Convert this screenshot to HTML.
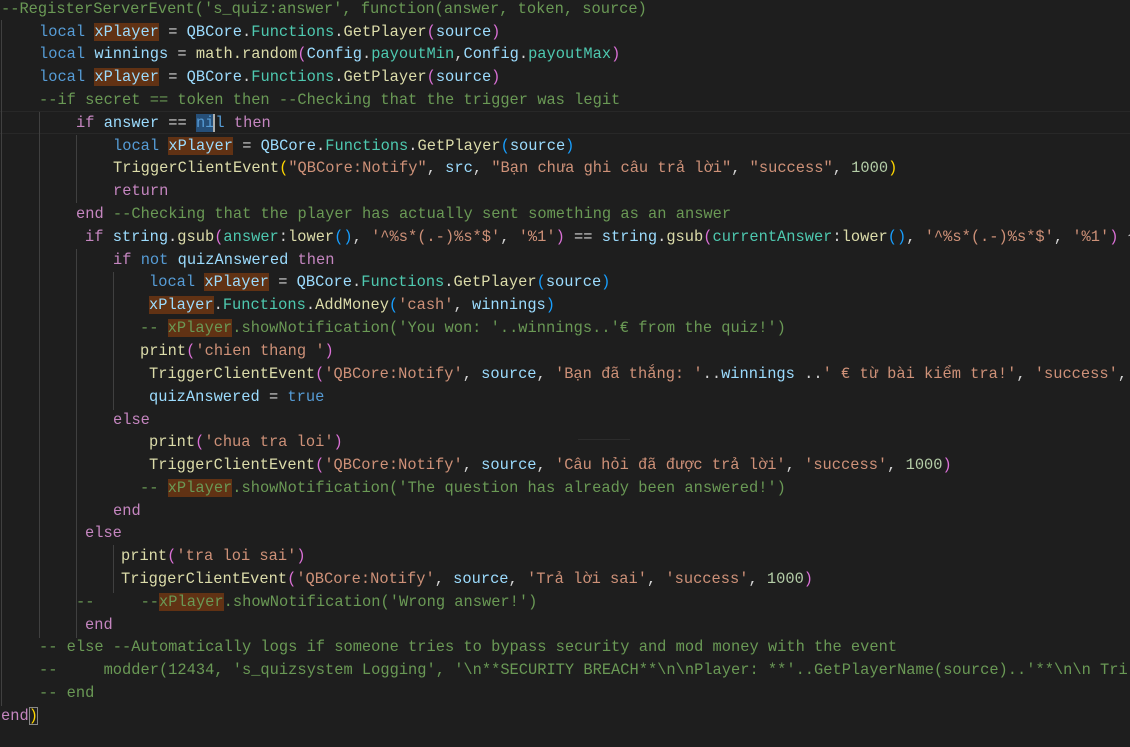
<!DOCTYPE html>
<html><head><meta charset="utf-8"><style>
html,body{margin:0;padding:0}
body{width:1130px;height:747px;background:#1e1e1e;overflow:hidden;position:relative;font-family:"Liberation Mono",monospace;font-size:15.38px;color:#d4d4d4}
#w{position:absolute;left:0;top:0;width:1130px;height:747px;overflow:hidden}
.l{position:absolute;white-space:pre;height:22.8px;line-height:22.8px;margin-top:2px}
.k{color:#569cd6}.c{color:#c586c0}.v{color:#9cdcfe}.f{color:#dcdcaa}.t{color:#4ec9b0}.s{color:#ce9178}.m{color:#6a9955}.n{color:#b5cea8}
.b1{color:#ffd700}.b2{color:#da70d6}.b3{color:#179fff}
.h{background:#613214}
.g{position:absolute;width:1px;background:#404040}
.cur{position:absolute;left:0;width:1130px;top:111px;height:21px;border-top:1px solid #282828;border-bottom:1px solid #282828}
</style></head><body><div id="w">
<div class="cur"></div>
<div class="g" style="left:1px;top:20px;height:686px"></div>
<div class="g" style="left:39px;top:112px;height:526px"></div>
<div class="g" style="left:76px;top:135px;height:68px"></div>
<div class="g" style="left:76px;top:249px;height:389px"></div>
<div class="g" style="left:113px;top:272px;height:138px"></div>
<div class="g" style="left:113px;top:545px;height:48px"></div>
<div style="position:absolute;left:578px;top:439px;width:52px;height:1px;background:#2c2c2c"></div>

<div class="l m" style="left:1px;top:-4px">--RegisterServerEvent('s_quiz:answer', function(answer, token, source)</div>
<div class="l" style="left:39px;top:19px"><span class="k">local</span> <span class="v h">xPlayer</span> = <span class="v">QBCore</span>.<span class="t">Functions</span>.<span class="f">GetPlayer</span><span class="b2">(</span><span class="v">source</span><span class="b2">)</span></div>
<div class="l" style="left:39px;top:41px"><span class="k">local</span> <span class="v">winnings</span> = <span class="f">math.random</span><span class="b2">(</span><span class="v">Config</span>.<span class="t">payoutMin</span>,<span class="v">Config</span>.<span class="t">payoutMax</span><span class="b2">)</span></div>
<div class="l" style="left:39px;top:64px"><span class="k">local</span> <span class="v h">xPlayer</span> = <span class="v">QBCore</span>.<span class="t">Functions</span>.<span class="f">GetPlayer</span><span class="b2">(</span><span class="v">source</span><span class="b2">)</span></div>
<div class="l m" style="left:39px;top:87px">--if secret == token then --Checking that the trigger was legit</div>
<div class="l" style="left:76px;top:110px"><span class="c">if</span> <span class="v">answer</span> == <span class="k" style="background:#264f78">ni</span><span class="k" style="border-left:2px solid #aeafad;margin-left:-1px">l</span> <span class="c">then</span></div>
<div class="l" style="left:113px;top:133px"><span class="k">local</span> <span class="v h">xPlayer</span> = <span class="v">QBCore</span>.<span class="t">Functions</span>.<span class="f">GetPlayer</span><span class="b3">(</span><span class="v">source</span><span class="b3">)</span></div>
<div class="l" style="left:113px;top:155px"><span class="f">TriggerClientEvent</span><span class="b1">(</span><span class="s">"QBCore:Notify"</span>, <span class="v">src</span>, <span class="s">"Bạn chưa ghi câu trả lời"</span>, <span class="s">"success"</span>, <span class="n">1000</span><span class="b1">)</span></div>
<div class="l c" style="left:113px;top:178px">return</div>
<div class="l" style="left:76px;top:201px"><span class="c">end</span> <span class="m">--Checking that the player has actually sent something as an answer</span></div>
<div class="l" style="left:85px;top:224px"><span class="c">if</span> <span class="v">string</span>.<span class="f">gsub</span><span class="b2">(</span><span class="t">answer</span>:<span class="f">lower</span><span class="b3">()</span>, <span class="s">'^%s*(.-)%s*$'</span>, <span class="s">'%1'</span><span class="b2">)</span> == <span class="v">string</span>.<span class="f">gsub</span><span class="b2">(</span><span class="t">currentAnswer</span>:<span class="f">lower</span><span class="b3">()</span>, <span class="s">'^%s*(.-)%s*$'</span>, <span class="s">'%1'</span><span class="b2">)</span> ~=</div>
<div class="l" style="left:113px;top:247px"><span class="c">if</span> <span class="k">not</span> <span class="v">quizAnswered</span> <span class="c">then</span></div>
<div class="l" style="left:149px;top:269px"><span class="k">local</span> <span class="v h">xPlayer</span> = <span class="v">QBCore</span>.<span class="t">Functions</span>.<span class="f">GetPlayer</span><span class="b3">(</span><span class="v">source</span><span class="b3">)</span></div>
<div class="l" style="left:149px;top:292px"><span class="v h">xPlayer</span>.<span class="t">Functions</span>.<span class="f">AddMoney</span><span class="b3">(</span><span class="s">'cash'</span>, <span class="v">winnings</span><span class="b3">)</span></div>
<div class="l m" style="left:140px;top:315px">-- <span class="h">xPlayer</span>.showNotification('You won: '..winnings..'€ from the quiz!')</div>
<div class="l" style="left:140px;top:338px"><span class="f">print</span><span class="b2">(</span><span class="s">'chien thang '</span><span class="b2">)</span></div>
<div class="l" style="left:149px;top:361px"><span class="f">TriggerClientEvent</span><span class="b2">(</span><span class="s">'QBCore:Notify'</span>, <span class="v">source</span>, <span class="s">'Bạn đã thắng: '</span>..<span class="v">winnings</span> ..<span class="s">' € từ bài kiểm tra!'</span>, <span class="s">'success'</span>,</div>
<div class="l" style="left:149px;top:384px"><span class="v">quizAnswered</span> = <span class="k">true</span></div>
<div class="l c" style="left:113px;top:407px">else</div>
<div class="l" style="left:149px;top:429px"><span class="f">print</span><span class="b2">(</span><span class="s">'chua tra loi'</span><span class="b2">)</span></div>
<div class="l" style="left:149px;top:452px"><span class="f">TriggerClientEvent</span><span class="b2">(</span><span class="s">'QBCore:Notify'</span>, <span class="v">source</span>, <span class="s">'Câu hỏi đã được trả lời'</span>, <span class="s">'success'</span>, <span class="n">1000</span><span class="b2">)</span></div>
<div class="l m" style="left:140px;top:475px">-- <span class="h">xPlayer</span>.showNotification('The question has already been answered!')</div>
<div class="l c" style="left:113px;top:498px">end</div>
<div class="l c" style="left:85px;top:520px">else</div>
<div class="l" style="left:121px;top:543px"><span class="f">print</span><span class="b2">(</span><span class="s">'tra loi sai'</span><span class="b2">)</span></div>
<div class="l" style="left:121px;top:566px"><span class="f">TriggerClientEvent</span><span class="b2">(</span><span class="s">'QBCore:Notify'</span>, <span class="v">source</span>, <span class="s">'Trả lời sai'</span>, <span class="s">'success'</span>, <span class="n">1000</span><span class="b2">)</span></div>
<div class="l m" style="left:76px;top:589px">--     --<span class="h">xPlayer</span>.showNotification('Wrong answer!')</div>
<div class="l c" style="left:85px;top:612px">end</div>
<div class="l m" style="left:39px;top:634px">-- else --Automatically logs if someone tries to bypass security and mod money with the event</div>
<div class="l m" style="left:39px;top:657px">--     modder(12434, 's_quizsystem Logging', '\n**SECURITY BREACH**\n\nPlayer: **'..GetPlayerName(source)..'**\n\n Tri</div>
<div class="l m" style="left:39px;top:680px">-- end</div>
<div class="l" style="left:1px;top:703px"><span class="c">end</span><span class="b1" style="outline:1px solid #888;outline-offset:-1px">)</span></div>
</div></body></html>
